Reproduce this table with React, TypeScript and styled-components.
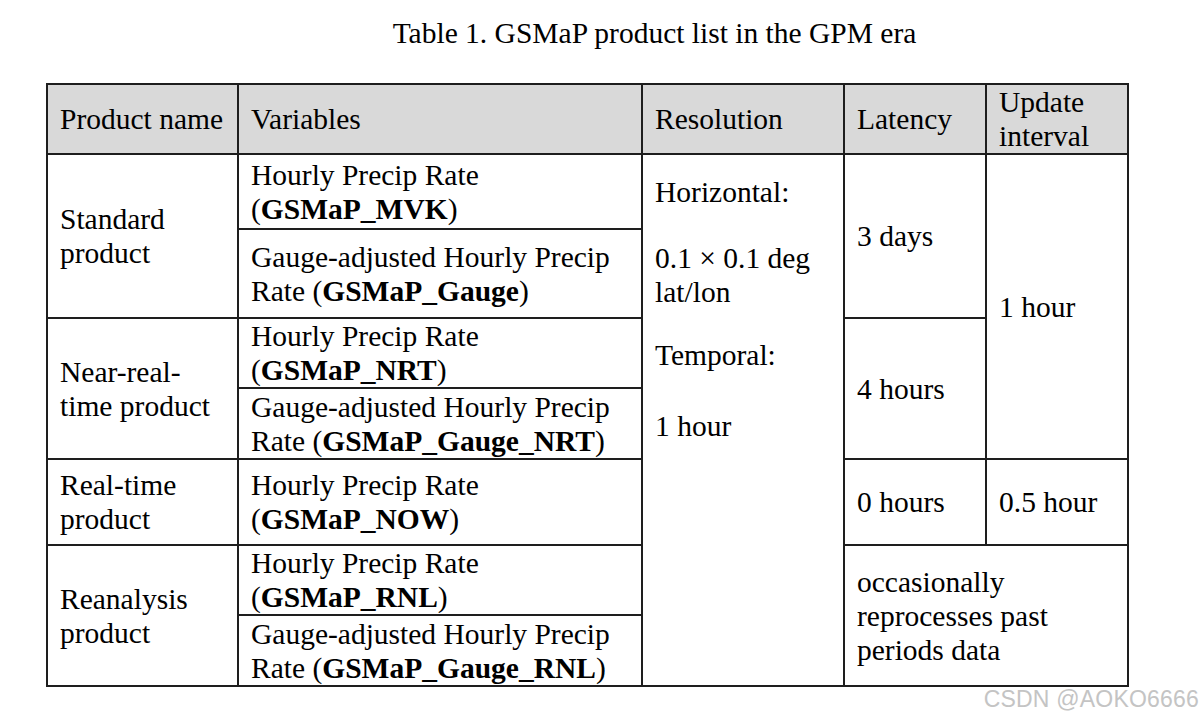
import React from "react";
import styled, { createGlobalStyle } from "styled-components";

const GlobalStyle = createGlobalStyle`
  html, body {
    margin: 0;
    padding: 0;
    background: #ffffff;
  }
  body {
    font-family: "Liberation Serif", "Times New Roman", serif;
    color: #000000;
  }
`;

const Page = styled.div`
  position: relative;
  width: 1202px;
  height: 719px;
  overflow: hidden;
  padding: 16px 0 0 46px;
  box-sizing: border-box;
`;

const Title = styled.div`
  width: 1083px;
  padding-left: 134px;
  box-sizing: border-box;
  text-align: center;
  font-size: 29.5px;
  line-height: 34px;
  margin-bottom: 33px;
`;

const Table = styled.table`
  border-collapse: collapse;
  table-layout: fixed;
  width: 1083px;
  font-size: 29.5px;
  line-height: 34px;
`;

const Row = styled.tr<{ $h: number }>`
  height: ${({ $h }) => $h}px;
`;

const HeadCell = styled.th`
  background: #d9d9d9;
  border: 2px solid #1e1e1e;
  font-weight: normal;
  text-align: left;
  vertical-align: middle;
  padding: 0 12px;
  white-space: nowrap;
`;

const Cell = styled.td<{ $top?: boolean }>`
  border: 2px solid #1e1e1e;
  text-align: left;
  vertical-align: ${({ $top }) => ($top ? "top" : "middle")};
  padding: ${({ $top }) => ($top ? "20px 12px 0" : "0 12px")};
  white-space: nowrap;
`;

const Para = styled.div<{ $gap?: number }>`
  margin-bottom: ${({ $gap }) => $gap ?? 0}px;
`;

const Watermark = styled.div`
  position: absolute;
  right: 3px;
  top: 686px;
  font-family: "Liberation Sans", Arial, sans-serif;
  font-size: 23px;
  line-height: 26px;
  color: #c4c4c4;
  letter-spacing: 0.2px;
`;

export default function App() {
  return (
    <>
      <GlobalStyle />
      <Page>
        <Title>Table 1. GSMaP product list in the GPM era</Title>
        <Table>
          <colgroup>
            <col style={{ width: 191 }} />
            <col style={{ width: 404 }} />
            <col style={{ width: 202 }} />
            <col style={{ width: 142 }} />
            <col style={{ width: 142 }} />
          </colgroup>
          <thead>
            <Row $h={70}>
              <HeadCell>Product name</HeadCell>
              <HeadCell>Variables</HeadCell>
              <HeadCell>Resolution</HeadCell>
              <HeadCell>Latency</HeadCell>
              <HeadCell>
                Update
                <br />
                interval
              </HeadCell>
            </Row>
          </thead>
          <tbody>
            <Row $h={75}>
              <Cell rowSpan={2}>
                Standard
                <br />
                product
              </Cell>
              <Cell>
                Hourly Precip Rate
                <br />(<b>GSMaP_MVK</b>)
              </Cell>
              <Cell rowSpan={7} $top>
                <Para $gap={32}>Horizontal:</Para>
                <Para>0.1 × 0.1 deg</Para>
                <Para $gap={29}>lat/lon</Para>
                <Para $gap={37}>Temporal:</Para>
                <Para>1 hour</Para>
              </Cell>
              <Cell rowSpan={2}>3 days</Cell>
              <Cell rowSpan={4}>1 hour</Cell>
            </Row>
            <Row $h={89}>
              <Cell>
                Gauge-adjusted Hourly Precip
                <br />
                Rate (<b>GSMaP_Gauge</b>)
              </Cell>
            </Row>
            <Row $h={70}>
              <Cell rowSpan={2}>
                Near-real-
                <br />
                time product
              </Cell>
              <Cell>
                Hourly Precip Rate
                <br />(<b>GSMaP_NRT</b>)
              </Cell>
              <Cell rowSpan={2}>4 hours</Cell>
            </Row>
            <Row $h={71}>
              <Cell>
                Gauge-adjusted Hourly Precip
                <br />
                Rate (<b>GSMaP_Gauge_NRT</b>)
              </Cell>
            </Row>
            <Row $h={86}>
              <Cell>
                Real-time
                <br />
                product
              </Cell>
              <Cell>
                Hourly Precip Rate
                <br />(<b>GSMaP_NOW</b>)
              </Cell>
              <Cell>0 hours</Cell>
              <Cell>0.5 hour</Cell>
            </Row>
            <Row $h={70}>
              <Cell rowSpan={2}>
                Reanalysis
                <br />
                product
              </Cell>
              <Cell>
                Hourly Precip Rate
                <br />(<b>GSMaP_RNL</b>)
              </Cell>
              <Cell rowSpan={2} colSpan={2}>
                occasionally
                <br />
                reprocesses past
                <br />
                periods data
              </Cell>
            </Row>
            <Row $h={71}>
              <Cell>
                Gauge-adjusted Hourly Precip
                <br />
                Rate (<b>GSMaP_Gauge_RNL</b>)
              </Cell>
            </Row>
          </tbody>
        </Table>
        <Watermark>CSDN @AOKO6666</Watermark>
      </Page>
    </>
  );
}
